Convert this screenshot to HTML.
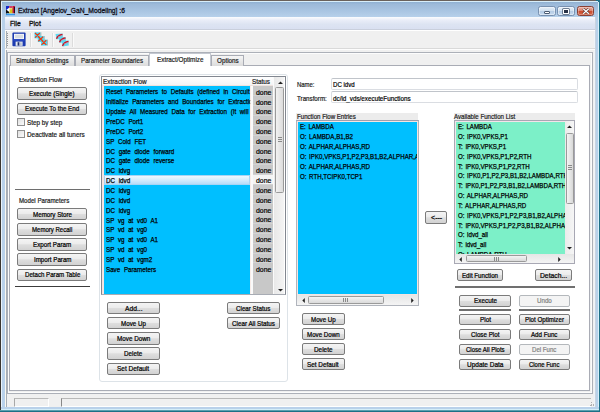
<!DOCTYPE html>
<html><head><meta charset="utf-8"><style>
html,body{margin:0;padding:0;}
body{width:600px;height:412px;position:relative;overflow:hidden;background:#1d6f86;font-family:"Liberation Sans", sans-serif;}
#w div{position:absolute;}
#w .t{white-space:pre;line-height:9px;transform-origin:0 0;-webkit-text-stroke:0.2px currentColor;}
</style></head><body><div id="w"><div style="left:0.00px;top:0.00px;width:599px;height:411px;background:#b9d1ea;"></div><div style="left:0.00px;top:0.00px;width:1px;height:411px;background:#3a3530;"></div><div style="left:1.00px;top:0.00px;width:598px;height:1px;background:#6a625c;"></div><div style="left:1.00px;top:1.00px;width:598px;height:1px;background:#d8eefa;"></div><div style="left:1.00px;top:2.00px;width:598px;height:15px;background:linear-gradient(#8fb0d2,#9dbad9 15%,#a9c5e2 60%,#b6d0ea);"></div><div style="left:1.00px;top:2.00px;width:1px;height:409px;background:#e8f2fb;"></div><div style="left:598.00px;top:1.00px;width:1px;height:410px;background:#d8f0fa;"></div><div style="left:5.00px;top:17.00px;width:590px;height:390px;background:#f0f0f0;"></div><div style="left:5.00px;top:17.00px;width:1px;height:390px;background:#fbf8f0;"></div><div style="left:6.00px;top:17.00px;width:1px;height:390px;background:#a6adb5;"></div><div style="left:594.00px;top:17.00px;width:1px;height:390px;background:#eef4fa;"></div><div style="left:595.00px;top:17.00px;width:0.8px;height:390px;background:#c8d4e0;"></div><div style="left:1.00px;top:407.00px;width:598px;height:3px;background:#b9d1ea;"></div><div style="left:1.00px;top:409.00px;width:598px;height:1px;background:#d4eef8;"></div><div style="left:0.00px;top:410.00px;width:600px;height:1px;background:#5aa0b0;"></div><div style="left:0.00px;top:411.00px;width:600px;height:1px;background:#1d6f86;"></div><div style="left:599.00px;top:0.00px;width:1px;height:412px;background:#1d6f86;"></div><svg style="position:absolute;left:5px;top:5px" width="11" height="11" viewBox="0 0 11 11"><rect x="1" y="1" width="4" height="4" fill="#1428c8"/><rect x="1" y="5" width="4" height="3.5" fill="#101010"/><rect x="4" y="1" width="4" height="7.5" fill="#e8e070"/><rect x="4.2" y="4.5" width="3.6" height="4" fill="#d8c020"/><rect x="7.5" y="1" width="2.5" height="7.5" fill="#c01838"/><rect x="4" y="1" width="3.5" height="2" fill="#d04070"/><path d="M1.5 4.8 L4.5 2.5 L4.5 7.2Z" fill="#fff"/><rect x="9" y="2" width="1" height="6" fill="#300818"/><rect x="1" y="8.8" width="9" height="1.4" fill="#2a90e8"/><rect x="2" y="8.5" width="7" height="0.6" fill="#a0e0ff"/></svg><div class="t" style="left:18.00px;top:6.47px;font-size:7.6px;color:#101020;transform:scaleX(0.886);-webkit-text-stroke:0.3px currentColor;">Extract [Angelov_GaN_Modeling] :6</div><div style="left:538.40px;top:6.20px;width:17.5px;height:9.6px;border:1px solid #7891b0;border-radius:2.5px;box-sizing:border-box;background:linear-gradient(#e6eff8,#d2e1f0 45%,#b4cbe4 50%,#c8dbef 100%);box-shadow:inset 0 0 0 0.6px rgba(255,255,255,.7);"></div><div style="left:544.00px;top:10.80px;width:6px;height:2.8px;background:#fff;border:0.8px solid #4a5a70;border-radius:1px;box-sizing:border-box;"></div><div style="left:557.40px;top:6.20px;width:17.5px;height:9.6px;border:1px solid #7891b0;border-radius:2.5px;box-sizing:border-box;background:linear-gradient(#e6eff8,#d2e1f0 45%,#b4cbe4 50%,#c8dbef 100%);box-shadow:inset 0 0 0 0.6px rgba(255,255,255,.7);"></div><div style="left:563.00px;top:8.80px;width:6.4px;height:5px;background:#2a3448;border:1.3px solid #fff;box-shadow:0 0 0 0.7px #4a5a70;border-radius:0.5px;box-sizing:border-box;"></div><div style="left:576.60px;top:6.20px;width:17.8px;height:9.6px;border:1px solid #8a4034;border-radius:2.5px;box-sizing:border-box;background:linear-gradient(#eab0a2,#dc8470 45%,#c8482c 50%,#d86a4c 100%);box-shadow:inset 0 0 0 0.6px rgba(255,255,255,.5);"></div><svg style="position:absolute;left:581.5px;top:8px" width="8" height="6.5" viewBox="0 0 8 6.5"><path d="M1.2 0.8 L6.8 5.7 M6.8 0.8 L1.2 5.7" stroke="#4a2a28" stroke-width="2.4"/><path d="M1.2 0.8 L6.8 5.7 M6.8 0.8 L1.2 5.7" stroke="#fff" stroke-width="1.3"/></svg><div style="left:596.00px;top:0.00px;width:4px;height:1px;background:#1d6f86;"></div><div style="left:598.00px;top:1.00px;width:2px;height:1px;background:#1d6f86;"></div><div style="left:599.00px;top:2.00px;width:1px;height:1px;background:#1d6f86;"></div><div style="left:5.00px;top:17.00px;width:590px;height:12px;background:linear-gradient(#fbfcfe 0%,#eaeef8 25%,#dde4f2 60%,#d9e0f1 100%);"></div><div style="left:5.00px;top:29.00px;width:590px;height:1px;background:#c9cfdc;"></div><div style="left:5.00px;top:30.00px;width:590px;height:1px;background:#ffffff;"></div><div class="t" style="left:9.50px;top:18.74px;font-size:7.4px;color:#101010;transform:scaleX(0.898);-webkit-text-stroke:0.3px currentColor;">File</div><div class="t" style="left:29.20px;top:18.74px;font-size:7.4px;color:#101010;transform:scaleX(0.925);-webkit-text-stroke:0.3px currentColor;">Plot</div><div style="left:5.00px;top:48.00px;width:590px;height:1px;background:#d9d9d9;"></div><div style="left:5.00px;top:49.00px;width:590px;height:1px;background:#fdfdfd;"></div><div style="left:7.00px;top:33.00px;width:1px;height:1px;background:#9a9a9a;"></div><div style="left:7.00px;top:35.00px;width:1px;height:1px;background:#9a9a9a;"></div><div style="left:7.00px;top:37.00px;width:1px;height:1px;background:#9a9a9a;"></div><div style="left:7.00px;top:39.00px;width:1px;height:1px;background:#9a9a9a;"></div><div style="left:7.00px;top:41.00px;width:1px;height:1px;background:#9a9a9a;"></div><div style="left:7.00px;top:43.00px;width:1px;height:1px;background:#9a9a9a;"></div><div style="left:7.00px;top:45.00px;width:1px;height:1px;background:#9a9a9a;"></div><svg style="position:absolute;left:12px;top:32px" width="14" height="15" viewBox="0 0 14 15"><rect x="0.4" y="0.4" width="13.2" height="13.9" rx="1" fill="#1e3cb0"/><rect x="2" y="1.8" width="10" height="5.4" fill="#f4f6f8"/><rect x="3" y="2.8" width="8" height="3.4" fill="#d8dce2"/><rect x="1.4" y="7.2" width="11.2" height="2" fill="#2848c0"/><rect x="3.6" y="9.6" width="7" height="4.2" fill="#e8ecf0"/><rect x="5.6" y="10.2" width="1.8" height="3.4" fill="#203070"/><rect x="8.2" y="10.4" width="1.4" height="3" fill="#b0b8c8"/></svg><div style="left:30.00px;top:33.00px;width:1px;height:14px;background:#dcdcdc;"></div><div style="left:31.00px;top:33.00px;width:1px;height:14px;background:#fafafa;"></div><svg style="position:absolute;left:33.5px;top:32.4px" width="14" height="14" viewBox="0 0 14 14"><rect x="0.5" y="0.3" width="6" height="6" fill="#48dcf8"/><rect x="6.5" y="0.3" width="0.8" height="6" fill="#9aa"/><rect x="3.8" y="4" width="6" height="6" fill="#48dcf8"/><rect x="9.8" y="4" width="0.8" height="6" fill="#9aa"/><rect x="7" y="7.6" width="6" height="6" fill="#48dcf8"/><rect x="13" y="7.6" width="0.8" height="6" fill="#9aa"/><path d="M1 1 L5.8 5.6 M5.8 1 L1 5.6 M4.3 4.7 L9.1 9.3 M9.1 4.7 L4.3 9.3 M7.5 8.3 L12.3 12.9 M12.3 8.3 L7.5 12.9" stroke="#f03a10" stroke-width="1.2"/></svg><div style="left:52.00px;top:33.00px;width:1px;height:14px;background:#dcdcdc;"></div><div style="left:53.00px;top:33.00px;width:1px;height:14px;background:#fafafa;"></div><svg style="position:absolute;left:55px;top:32.6px" width="14" height="14" viewBox="0 0 14 14"><path d="M0.5 1 L7.5 0.5 L8 5 L1.5 6.5Z" fill="#60d8f0"/><path d="M3.5 4.5 L10.5 4 L11 8.5 L4.5 10Z" fill="#60d8f0"/><path d="M6.5 8 L13.5 7.5 L13.8 12.5 L7.5 13.5Z" fill="#60d8f0"/><path d="M1.5 5.8 Q3 2 7.5 1.5 M4.5 9.3 Q6 5.5 10.5 5 M7.5 13 Q9 9 13.5 8.5" stroke="#d01020" stroke-width="1.3" fill="none"/><path d="M3 4 L7 2.5 M6 7.5 L10 6 M9 11 L13 9.5" stroke="#c0a0b8" stroke-width="0.8"/></svg><div style="left:72.00px;top:33.00px;width:1px;height:14px;background:#dcdcdc;"></div><div style="left:73.00px;top:33.00px;width:1px;height:14px;background:#fafafa;"></div><div style="left:6.50px;top:51.50px;width:586.6px;height:342px;border:1px solid #acb0b8;box-sizing:border-box;"></div><div style="left:7.50px;top:52.50px;width:584.6px;height:340px;border:1px solid #fcfcfc;box-sizing:border-box;"></div><div style="left:9.00px;top:65.00px;width:581.2px;height:326px;border:1px solid #a9acb5;box-sizing:border-box;background:#fff;"></div><div style="left:10.00px;top:54.50px;width:64.5px;height:11px;border:1px solid #a9acb5;border-bottom:none;box-sizing:border-box;background:linear-gradient(#f6f6f6,#e8e8e8 50%,#dcdcdc);"></div><div class="t" style="left:15.50px;top:55.51px;font-size:7.2px;color:#1a1a1a;transform:scaleX(0.853);">Simulation Settings</div><div style="left:74.50px;top:54.50px;width:74.69999999999999px;height:11px;border:1px solid #a9acb5;border-bottom:none;box-sizing:border-box;background:linear-gradient(#f6f6f6,#e8e8e8 50%,#dcdcdc);"></div><div class="t" style="left:81.00px;top:55.51px;font-size:7.2px;color:#1a1a1a;transform:scaleX(0.862);">Parameter Boundaries</div><div style="left:211.20px;top:54.50px;width:33.30000000000001px;height:11px;border:1px solid #a9acb5;border-bottom:none;box-sizing:border-box;background:linear-gradient(#f6f6f6,#e8e8e8 50%,#dcdcdc);"></div><div class="t" style="left:217.00px;top:55.51px;font-size:7.2px;color:#1a1a1a;transform:scaleX(0.876);">Options</div><div style="left:149.20px;top:53.30px;width:62px;height:13px;border:1px solid #c4c8d0;border-bottom:none;box-sizing:border-box;background:#fff;"></div><div class="t" style="left:156.70px;top:54.81px;font-size:7.2px;color:#1a1a1a;transform:scaleX(0.882);">Extract/Optimize</div><div style="left:14.00px;top:397.50px;width:35px;height:9px;border-top:1px solid #b8b8b8;border-left:1px solid #a8a8a8;border-right:1px solid #fff;border-bottom:1px solid #fff;box-sizing:border-box;"></div><div style="left:61.00px;top:397.50px;width:530px;height:9px;border-top:1px solid #b8b8b8;border-left:1px solid #888;border-bottom:1px solid #fff;box-sizing:border-box;"></div><div style="left:591.00px;top:402.00px;width:1px;height:1px;background:#b0b0b0;"></div><div style="left:592.50px;top:403.50px;width:1px;height:1px;background:#b0b0b0;"></div><div style="left:591.00px;top:403.50px;width:1px;height:1px;background:#b0b0b0;"></div><div style="left:589.50px;top:405.00px;width:1px;height:1px;background:#b0b0b0;"></div><div style="left:591.00px;top:405.00px;width:1px;height:1px;background:#b0b0b0;"></div><div style="left:592.50px;top:405.00px;width:1px;height:1px;background:#b0b0b0;"></div><div class="t" style="left:18.90px;top:74.87px;font-size:7.0px;color:#1a1a1a;transform:scaleX(0.898);">Extraction Flow</div><div style="left:17.40px;top:87.40px;width:69.69999999999999px;height:12.199999999999989px;border:1px solid #7b7b7b;border-radius:2px;box-sizing:border-box;background:linear-gradient(#f4f4f4 0%,#ececec 45%,#dedede 52%,#d2d2d2 100%);"></div><div class="t" style="left:29.45px;top:89.17px;font-size:7.0px;color:#000;transform:scaleX(0.888);-webkit-text-stroke:0.22px currentColor;">Execute (Single)</div><div style="left:17.40px;top:102.75px;width:69.69999999999999px;height:11.849999999999994px;border:1px solid #7b7b7b;border-radius:2px;box-sizing:border-box;background:linear-gradient(#f4f4f4 0%,#ececec 45%,#dedede 52%,#d2d2d2 100%);"></div><div class="t" style="left:25.10px;top:104.35px;font-size:7.0px;color:#000;transform:scaleX(0.896);-webkit-text-stroke:0.22px currentColor;">Execute To the End</div><div style="left:17.00px;top:118.00px;width:8px;height:8px;border:1px solid #8f8f8f;box-sizing:border-box;background:linear-gradient(135deg,#e0e0e0,#fafafa);"></div><div class="t" style="left:26.90px;top:118.27px;font-size:7.0px;color:#1a1a1a;transform:scaleX(0.907);">Step by step</div><div style="left:17.00px;top:130.00px;width:8px;height:8px;border:1px solid #8f8f8f;box-sizing:border-box;background:linear-gradient(135deg,#e0e0e0,#fafafa);"></div><div class="t" style="left:26.90px;top:129.67px;font-size:7.0px;color:#1a1a1a;transform:scaleX(0.911);">Deactivate all tuners</div><div style="left:15.00px;top:188.50px;width:75px;height:1.2px;background:#6e6e6e;"></div><div class="t" style="left:18.80px;top:195.87px;font-size:7.0px;color:#1a1a1a;transform:scaleX(0.878);">Model Parameters</div><div style="left:17.40px;top:208.30px;width:69.69999999999999px;height:12.199999999999989px;border:1px solid #7b7b7b;border-radius:2px;box-sizing:border-box;background:linear-gradient(#f4f4f4 0%,#ececec 45%,#dedede 52%,#d2d2d2 100%);"></div><div class="t" style="left:32.70px;top:210.07px;font-size:7.0px;color:#000;transform:scaleX(0.889);-webkit-text-stroke:0.22px currentColor;">Memory Store</div><div style="left:17.40px;top:223.35px;width:69.69999999999999px;height:12.199999999999989px;border:1px solid #7b7b7b;border-radius:2px;box-sizing:border-box;background:linear-gradient(#f4f4f4 0%,#ececec 45%,#dedede 52%,#d2d2d2 100%);"></div><div class="t" style="left:32.10px;top:225.12px;font-size:7.0px;color:#000;transform:scaleX(0.863);-webkit-text-stroke:0.22px currentColor;">Memory Recall</div><div style="left:17.40px;top:238.40px;width:69.69999999999999px;height:12.199999999999989px;border:1px solid #7b7b7b;border-radius:2px;box-sizing:border-box;background:linear-gradient(#f4f4f4 0%,#ececec 45%,#dedede 52%,#d2d2d2 100%);"></div><div class="t" style="left:33.10px;top:240.17px;font-size:7.0px;color:#000;transform:scaleX(0.895);-webkit-text-stroke:0.22px currentColor;">Export Param</div><div style="left:17.40px;top:253.45px;width:69.69999999999999px;height:12.200000000000017px;border:1px solid #7b7b7b;border-radius:2px;box-sizing:border-box;background:linear-gradient(#f4f4f4 0%,#ececec 45%,#dedede 52%,#d2d2d2 100%);"></div><div class="t" style="left:33.50px;top:255.22px;font-size:7.0px;color:#000;transform:scaleX(0.884);-webkit-text-stroke:0.22px currentColor;">Import Param</div><div style="left:17.40px;top:268.50px;width:69.69999999999999px;height:12.199999999999989px;border:1px solid #7b7b7b;border-radius:2px;box-sizing:border-box;background:linear-gradient(#f4f4f4 0%,#ececec 45%,#dedede 52%,#d2d2d2 100%);"></div><div class="t" style="left:24.55px;top:270.27px;font-size:7.0px;color:#000;transform:scaleX(0.875);-webkit-text-stroke:0.22px currentColor;">Detach Param Table</div><div style="left:15.00px;top:285.80px;width:75px;height:1.2px;background:#3c3c3c;"></div><div style="left:98.50px;top:73.50px;width:189px;height:308px;border:1px solid #dde3e8;border-radius:3px;box-sizing:border-box;"></div><div style="left:101.00px;top:76.00px;width:184.5px;height:219px;border:1px solid #828790;border-bottom-color:#a8acb4;box-sizing:border-box;background:#fff;"></div><div style="left:102.00px;top:77.00px;width:172px;height:9px;background:linear-gradient(#ffffff,#f1f2f4);"></div><div class="t" style="left:102.50px;top:77.37px;font-size:7.0px;color:#1a1a1a;transform:scaleX(0.913);">Extraction Flow</div><div class="t" style="left:252.00px;top:77.37px;font-size:7.0px;color:#1a1a1a;transform:scaleX(0.906);">Status</div><div style="left:102.00px;top:86.00px;width:2px;height:208px;background:#f6e4e0;"></div><div style="left:104.00px;top:86.30px;width:146px;height:207.7px;background:#00bfff;"></div><div style="left:102.00px;top:85.30px;width:172px;height:1px;background:#efe2de;"></div><div style="left:250.00px;top:86.00px;width:1.5px;height:208px;background:#f8ece8;"></div><div style="left:251.00px;top:86.00px;width:1.5px;height:208px;background:#fafafa;"></div><div style="left:252.50px;top:86.00px;width:20.5px;height:208px;background:#c8c8c8;"></div><div style="left:273.00px;top:77.00px;width:1.5px;height:217px;background:#fafafa;"></div><div class="t" style="left:106.25px;top:87.47px;font-size:7.0px;color:#000;transform:scaleX(0.890);width:161.52px;overflow:hidden;word-spacing:2.2px;-webkit-text-stroke:0.25px #000;">Reset Parameters to Defaults (defined in Circuit Page)</div><div class="t" style="left:256.00px;top:87.67px;font-size:7.0px;color:#000;transform:scaleX(0.982);">done</div><div class="t" style="left:106.25px;top:97.32px;font-size:7.0px;color:#000;transform:scaleX(0.890);width:161.52px;overflow:hidden;word-spacing:2.2px;-webkit-text-stroke:0.25px #000;">Initialize Parameters and Boundaries for Extraction</div><div class="t" style="left:256.00px;top:97.50px;font-size:7.0px;color:#000;transform:scaleX(0.982);">done</div><div class="t" style="left:106.25px;top:107.17px;font-size:7.0px;color:#000;transform:scaleX(0.890);width:161.52px;overflow:hidden;word-spacing:2.2px;-webkit-text-stroke:0.25px #000;">Update All Measured Data for Extraction (It will take a while)</div><div class="t" style="left:256.00px;top:107.33px;font-size:7.0px;color:#000;transform:scaleX(0.982);">done</div><div class="t" style="left:106.25px;top:117.02px;font-size:7.0px;color:#000;transform:scaleX(0.890);width:161.52px;overflow:hidden;word-spacing:2.2px;-webkit-text-stroke:0.25px #000;">PreDC Port1</div><div class="t" style="left:256.00px;top:117.16px;font-size:7.0px;color:#000;transform:scaleX(0.982);">done</div><div class="t" style="left:106.25px;top:126.87px;font-size:7.0px;color:#000;transform:scaleX(0.890);width:161.52px;overflow:hidden;word-spacing:2.2px;-webkit-text-stroke:0.25px #000;">PreDC Port2</div><div class="t" style="left:256.00px;top:126.99px;font-size:7.0px;color:#000;transform:scaleX(0.982);">done</div><div class="t" style="left:106.25px;top:136.72px;font-size:7.0px;color:#000;transform:scaleX(0.890);width:161.52px;overflow:hidden;word-spacing:2.2px;-webkit-text-stroke:0.25px #000;">SP Cold FET</div><div class="t" style="left:256.00px;top:136.82px;font-size:7.0px;color:#000;transform:scaleX(0.982);">done</div><div class="t" style="left:106.25px;top:146.57px;font-size:7.0px;color:#000;transform:scaleX(0.890);width:161.52px;overflow:hidden;word-spacing:2.2px;-webkit-text-stroke:0.25px #000;">DC gate diode forward</div><div class="t" style="left:256.00px;top:146.65px;font-size:7.0px;color:#000;transform:scaleX(0.982);">done</div><div class="t" style="left:106.25px;top:156.42px;font-size:7.0px;color:#000;transform:scaleX(0.890);width:161.52px;overflow:hidden;word-spacing:2.2px;-webkit-text-stroke:0.25px #000;">DC gate diode reverse</div><div class="t" style="left:256.00px;top:156.48px;font-size:7.0px;color:#000;transform:scaleX(0.982);">done</div><div class="t" style="left:106.25px;top:166.27px;font-size:7.0px;color:#000;transform:scaleX(0.890);width:161.52px;overflow:hidden;word-spacing:2.2px;-webkit-text-stroke:0.25px #000;">DC idvg</div><div class="t" style="left:256.00px;top:166.31px;font-size:7.0px;color:#000;transform:scaleX(0.982);">done</div><div style="left:104.00px;top:175.07px;width:146px;height:10.03px;background:linear-gradient(#eef8ff,#d4ecfd 50%,#b8dcf9);border:1px solid #a8d4f4;box-sizing:border-box;"></div><div style="left:252.50px;top:174.47px;width:20.5px;height:9.83px;background:#f4f4f4;"></div><div class="t" style="left:106.25px;top:176.12px;font-size:7.0px;color:#000;transform:scaleX(0.890);width:161.52px;overflow:hidden;word-spacing:2.2px;-webkit-text-stroke:0.25px #000;">DC idvd</div><div class="t" style="left:256.00px;top:176.14px;font-size:7.0px;color:#000;transform:scaleX(0.982);">done</div><div class="t" style="left:106.25px;top:185.97px;font-size:7.0px;color:#000;transform:scaleX(0.890);width:161.52px;overflow:hidden;word-spacing:2.2px;-webkit-text-stroke:0.25px #000;">DC idvg</div><div class="t" style="left:256.00px;top:185.97px;font-size:7.0px;color:#000;transform:scaleX(0.982);">done</div><div class="t" style="left:106.25px;top:195.82px;font-size:7.0px;color:#000;transform:scaleX(0.890);width:161.52px;overflow:hidden;word-spacing:2.2px;-webkit-text-stroke:0.25px #000;">DC idvd</div><div class="t" style="left:256.00px;top:195.80px;font-size:7.0px;color:#000;transform:scaleX(0.982);">done</div><div class="t" style="left:106.25px;top:205.67px;font-size:7.0px;color:#000;transform:scaleX(0.890);width:161.52px;overflow:hidden;word-spacing:2.2px;-webkit-text-stroke:0.25px #000;">DC idvg</div><div class="t" style="left:256.00px;top:205.63px;font-size:7.0px;color:#000;transform:scaleX(0.982);">done</div><div class="t" style="left:106.25px;top:215.52px;font-size:7.0px;color:#000;transform:scaleX(0.890);width:161.52px;overflow:hidden;word-spacing:2.2px;-webkit-text-stroke:0.25px #000;">SP vg at vd0 A1</div><div class="t" style="left:256.00px;top:215.46px;font-size:7.0px;color:#000;transform:scaleX(0.982);">done</div><div class="t" style="left:106.25px;top:225.37px;font-size:7.0px;color:#000;transform:scaleX(0.890);width:161.52px;overflow:hidden;word-spacing:2.2px;-webkit-text-stroke:0.25px #000;">SP vd at vg0</div><div class="t" style="left:256.00px;top:225.29px;font-size:7.0px;color:#000;transform:scaleX(0.982);">done</div><div class="t" style="left:106.25px;top:235.22px;font-size:7.0px;color:#000;transform:scaleX(0.890);width:161.52px;overflow:hidden;word-spacing:2.2px;-webkit-text-stroke:0.25px #000;">SP vg at vd0 A1</div><div class="t" style="left:256.00px;top:235.12px;font-size:7.0px;color:#000;transform:scaleX(0.982);">done</div><div class="t" style="left:106.25px;top:245.07px;font-size:7.0px;color:#000;transform:scaleX(0.890);width:161.52px;overflow:hidden;word-spacing:2.2px;-webkit-text-stroke:0.25px #000;">SP vd at vg0</div><div class="t" style="left:256.00px;top:244.95px;font-size:7.0px;color:#000;transform:scaleX(0.982);">done</div><div class="t" style="left:106.25px;top:254.92px;font-size:7.0px;color:#000;transform:scaleX(0.890);width:161.52px;overflow:hidden;word-spacing:2.2px;-webkit-text-stroke:0.25px #000;">SP vd at vgm2</div><div class="t" style="left:256.00px;top:254.78px;font-size:7.0px;color:#000;transform:scaleX(0.982);">done</div><div class="t" style="left:106.25px;top:264.77px;font-size:7.0px;color:#000;transform:scaleX(0.890);width:161.52px;overflow:hidden;word-spacing:2.2px;-webkit-text-stroke:0.25px #000;">Save Parameters</div><div class="t" style="left:256.00px;top:264.61px;font-size:7.0px;color:#000;transform:scaleX(0.982);">done</div><div style="left:252.50px;top:95.33px;width:20.5px;height:0.6px;background:#d2d2d2;"></div><div style="left:252.50px;top:105.16px;width:20.5px;height:0.6px;background:#d2d2d2;"></div><div style="left:252.50px;top:114.99px;width:20.5px;height:0.6px;background:#d2d2d2;"></div><div style="left:252.50px;top:124.82px;width:20.5px;height:0.6px;background:#d2d2d2;"></div><div style="left:252.50px;top:134.65px;width:20.5px;height:0.6px;background:#d2d2d2;"></div><div style="left:252.50px;top:144.48px;width:20.5px;height:0.6px;background:#d2d2d2;"></div><div style="left:252.50px;top:154.31px;width:20.5px;height:0.6px;background:#d2d2d2;"></div><div style="left:252.50px;top:164.14px;width:20.5px;height:0.6px;background:#d2d2d2;"></div><div style="left:252.50px;top:173.97px;width:20.5px;height:0.6px;background:#d2d2d2;"></div><div style="left:252.50px;top:183.80px;width:20.5px;height:0.6px;background:#d2d2d2;"></div><div style="left:252.50px;top:193.63px;width:20.5px;height:0.6px;background:#d2d2d2;"></div><div style="left:252.50px;top:203.46px;width:20.5px;height:0.6px;background:#d2d2d2;"></div><div style="left:252.50px;top:213.29px;width:20.5px;height:0.6px;background:#d2d2d2;"></div><div style="left:252.50px;top:223.12px;width:20.5px;height:0.6px;background:#d2d2d2;"></div><div style="left:252.50px;top:232.95px;width:20.5px;height:0.6px;background:#d2d2d2;"></div><div style="left:252.50px;top:242.78px;width:20.5px;height:0.6px;background:#d2d2d2;"></div><div style="left:252.50px;top:252.61px;width:20.5px;height:0.6px;background:#d2d2d2;"></div><div style="left:252.50px;top:262.44px;width:20.5px;height:0.6px;background:#d2d2d2;"></div><div style="left:274.30px;top:77.00px;width:10.2px;height:217px;background:linear-gradient(90deg,#e8e8e8,#f4f4f4);"></div><div style="left:275.00px;top:87.00px;width:9px;height:106px;border:1px solid #9a9a9a;border-radius:1.5px;box-sizing:border-box;background:linear-gradient(90deg,#f2f2f2,#dcdcdc);"></div><div style="left:277.50px;top:137.00px;width:4px;height:1px;background:#8a8a8a;"></div><div style="left:277.50px;top:139.00px;width:4px;height:1px;background:#8a8a8a;"></div><div style="left:277.50px;top:141.00px;width:4px;height:1px;background:#8a8a8a;"></div><svg style="position:absolute;left:276.5px;top:80px" width="7" height="5"><path d="M1 4 L3.5 1.5 L6 4Z" fill="#222"/></svg><svg style="position:absolute;left:276.5px;top:287.5px" width="7" height="5"><path d="M1 1 L3.5 3.5 L6 1Z" fill="#222"/></svg><div style="left:106.80px;top:302.10px;width:52.89999999999999px;height:12.300000000000011px;border:1px solid #7b7b7b;border-radius:2px;box-sizing:border-box;background:linear-gradient(#f4f4f4 0%,#ececec 45%,#dedede 52%,#d2d2d2 100%);"></div><div class="t" style="left:124.50px;top:303.92px;font-size:7.0px;color:#000;transform:scaleX(0.956);-webkit-text-stroke:0.22px currentColor;">Add...</div><div style="left:106.80px;top:317.20px;width:52.89999999999999px;height:12.300000000000011px;border:1px solid #7b7b7b;border-radius:2px;box-sizing:border-box;background:linear-gradient(#f4f4f4 0%,#ececec 45%,#dedede 52%,#d2d2d2 100%);"></div><div class="t" style="left:120.80px;top:319.02px;font-size:7.0px;color:#000;transform:scaleX(0.889);-webkit-text-stroke:0.22px currentColor;">Move Up</div><div style="left:106.80px;top:332.30px;width:52.89999999999999px;height:12.300000000000011px;border:1px solid #7b7b7b;border-radius:2px;box-sizing:border-box;background:linear-gradient(#f4f4f4 0%,#ececec 45%,#dedede 52%,#d2d2d2 100%);"></div><div class="t" style="left:116.55px;top:334.12px;font-size:7.0px;color:#000;transform:scaleX(0.903);-webkit-text-stroke:0.22px currentColor;">Move Down</div><div style="left:106.80px;top:347.40px;width:52.89999999999999px;height:12.300000000000011px;border:1px solid #7b7b7b;border-radius:2px;box-sizing:border-box;background:linear-gradient(#f4f4f4 0%,#ececec 45%,#dedede 52%,#d2d2d2 100%);"></div><div class="t" style="left:124.15px;top:349.22px;font-size:7.0px;color:#000;transform:scaleX(0.899);-webkit-text-stroke:0.22px currentColor;">Delete</div><div style="left:106.80px;top:362.50px;width:52.89999999999999px;height:12.300000000000011px;border:1px solid #7b7b7b;border-radius:2px;box-sizing:border-box;background:linear-gradient(#f4f4f4 0%,#ececec 45%,#dedede 52%,#d2d2d2 100%);"></div><div class="t" style="left:117.20px;top:364.32px;font-size:7.0px;color:#000;transform:scaleX(0.927);-webkit-text-stroke:0.22px currentColor;">Set Default</div><div style="left:227.20px;top:302.30px;width:52.5px;height:12.0px;border:1px solid #7b7b7b;border-radius:2px;box-sizing:border-box;background:linear-gradient(#f4f4f4 0%,#ececec 45%,#dedede 52%,#d2d2d2 100%);"></div><div class="t" style="left:236.30px;top:303.97px;font-size:7.0px;color:#000;transform:scaleX(0.890);-webkit-text-stroke:0.22px currentColor;">Clear Status</div><div style="left:227.20px;top:317.30px;width:52.5px;height:12.0px;border:1px solid #7b7b7b;border-radius:2px;box-sizing:border-box;background:linear-gradient(#f4f4f4 0%,#ececec 45%,#dedede 52%,#d2d2d2 100%);"></div><div class="t" style="left:232.00px;top:318.97px;font-size:7.0px;color:#000;transform:scaleX(0.896);-webkit-text-stroke:0.22px currentColor;">Clear All Status</div><div class="t" style="left:296.70px;top:79.57px;font-size:7.0px;color:#1a1a1a;transform:scaleX(0.848);">Name:</div><div style="left:331.00px;top:77.50px;width:247px;height:12px;border:1px solid #dadde2;border-top-color:#c0c4ca;border-radius:2px;box-sizing:border-box;background:#fff;"></div><div class="t" style="left:332.80px;top:79.57px;font-size:7.0px;color:#000;transform:scaleX(0.871);">DC idvd</div><div class="t" style="left:296.70px;top:93.67px;font-size:7.0px;color:#1a1a1a;transform:scaleX(0.887);">Transform:</div><div style="left:331.00px;top:91.30px;width:247px;height:11.7px;border:1px solid #dadde2;border-top-color:#c0c4ca;border-radius:2px;box-sizing:border-box;background:#fff;"></div><div class="t" style="left:332.80px;top:93.67px;font-size:7.0px;color:#000;transform:scaleX(0.899);">dc/id_vds/executeFunctions</div><div style="left:296.00px;top:112.80px;width:122px;height:7px;background:#ececec;"></div><div class="t" style="left:296.70px;top:111.67px;font-size:7.0px;color:#1a1a1a;transform:scaleX(0.874);">Function Flow Entries</div><div style="left:296.30px;top:120.20px;width:122.3px;height:186px;border:1px solid #b0b4bc;border-top-color:#a0a0b0;box-sizing:border-box;background:#f0f0f0;"></div><div style="left:297.30px;top:121.20px;width:120.3px;height:173.6px;background:#f6e4e0;"></div><div style="left:298.00px;top:121.80px;width:119px;height:172.6px;background:#00bfff;"></div><div style="left:298.00px;top:121.80px;width:119px;height:172.6px;overflow:hidden;"><div class="t" style="left:2.00px;top:0.67px;font-size:7.0px;color:#000;transform:scaleX(0.880);word-spacing:1px;-webkit-text-stroke:0.25px #000;">E: LAMBDA</div><div class="t" style="left:2.00px;top:10.50px;font-size:7.0px;color:#000;transform:scaleX(0.880);word-spacing:1px;-webkit-text-stroke:0.25px #000;">O: LAMBDA,B1,B2</div><div class="t" style="left:2.00px;top:20.33px;font-size:7.0px;color:#000;transform:scaleX(0.880);word-spacing:1px;-webkit-text-stroke:0.25px #000;">O: ALPHAR,ALPHAS,RD</div><div class="t" style="left:2.00px;top:30.16px;font-size:7.0px;color:#000;transform:scaleX(0.880);word-spacing:1px;-webkit-text-stroke:0.25px #000;">O: IPK0,VPKS,P1,P2,P3,B1,B2,ALPHAR,ALPHAS</div><div class="t" style="left:2.00px;top:39.99px;font-size:7.0px;color:#000;transform:scaleX(0.880);word-spacing:1px;-webkit-text-stroke:0.25px #000;">O: ALPHAR,ALPHAS,RD</div><div class="t" style="left:2.00px;top:49.82px;font-size:7.0px;color:#000;transform:scaleX(0.880);word-spacing:1px;-webkit-text-stroke:0.25px #000;">O: RTH,TCIPK0,TCP1</div></div><div style="left:297.30px;top:294.80px;width:120.3px;height:10.5px;background:linear-gradient(#e6e6e6,#f4f4f4);"></div><div style="left:308.00px;top:296.40px;width:75.5px;height:7.6px;border:1px solid #9a9a9a;border-radius:1.5px;box-sizing:border-box;background:linear-gradient(#f4f4f4,#dadada);"></div><div style="left:343.00px;top:298.00px;width:1px;height:4px;background:#8a8a8a;"></div><div style="left:345.00px;top:298.00px;width:1px;height:4px;background:#8a8a8a;"></div><div style="left:347.00px;top:298.00px;width:1px;height:4px;background:#8a8a8a;"></div><svg style="position:absolute;left:300.5px;top:296.5px" width="5" height="7"><path d="M3.8 1 L1.3 3.5 L3.8 6Z" fill="#222"/></svg><svg style="position:absolute;left:410px;top:296.5px" width="5" height="7"><path d="M1.2 1 L3.7 3.5 L1.2 6Z" fill="#222"/></svg><div style="left:425.10px;top:211.30px;width:22.19999999999999px;height:12.399999999999977px;border:1px solid #7b7b7b;border-radius:2px;box-sizing:border-box;background:linear-gradient(#f4f4f4 0%,#ececec 45%,#dedede 52%,#d2d2d2 100%);"></div><div class="t" style="left:430.60px;top:213.17px;font-size:7.0px;color:#000;transform:scaleX(1.010);-webkit-text-stroke:0.22px currentColor;">&lt;---</div><div style="left:301.80px;top:313.30px;width:42.80000000000001px;height:11.899999999999977px;border:1px solid #7b7b7b;border-radius:2px;box-sizing:border-box;background:linear-gradient(#f4f4f4 0%,#ececec 45%,#dedede 52%,#d2d2d2 100%);"></div><div class="t" style="left:310.80px;top:314.92px;font-size:7.0px;color:#000;transform:scaleX(0.885);-webkit-text-stroke:0.22px currentColor;">Move Up</div><div style="left:301.80px;top:328.35px;width:42.80000000000001px;height:11.899999999999977px;border:1px solid #7b7b7b;border-radius:2px;box-sizing:border-box;background:linear-gradient(#f4f4f4 0%,#ececec 45%,#dedede 52%,#d2d2d2 100%);"></div><div class="t" style="left:306.85px;top:329.97px;font-size:7.0px;color:#000;transform:scaleX(0.885);-webkit-text-stroke:0.22px currentColor;">Move Down</div><div style="left:301.80px;top:343.40px;width:42.80000000000001px;height:11.899999999999977px;border:1px solid #7b7b7b;border-radius:2px;box-sizing:border-box;background:linear-gradient(#f4f4f4 0%,#ececec 45%,#dedede 52%,#d2d2d2 100%);"></div><div class="t" style="left:313.95px;top:345.02px;font-size:7.0px;color:#000;transform:scaleX(0.914);-webkit-text-stroke:0.22px currentColor;">Delete</div><div style="left:301.80px;top:358.45px;width:42.80000000000001px;height:11.899999999999977px;border:1px solid #7b7b7b;border-radius:2px;box-sizing:border-box;background:linear-gradient(#f4f4f4 0%,#ececec 45%,#dedede 52%,#d2d2d2 100%);"></div><div class="t" style="left:307.40px;top:360.07px;font-size:7.0px;color:#000;transform:scaleX(0.912);-webkit-text-stroke:0.22px currentColor;">Set Default</div><div style="left:454.00px;top:112.60px;width:121px;height:7px;background:#ececec;"></div><div class="t" style="left:454.20px;top:111.67px;font-size:7.0px;color:#1a1a1a;transform:scaleX(0.875);">Available Function List</div><div style="left:454.30px;top:120.40px;width:120.7px;height:143.9px;border:1px solid #a8a8b4;box-sizing:border-box;background:#f0f0f0;"></div><div style="left:455.30px;top:121.40px;width:109.5px;height:132.6px;background:#f4e4ea;"></div><div style="left:455.50px;top:121.60px;width:109px;height:132px;background:#7cf0c8;"></div><div style="left:455.50px;top:121.60px;width:109px;height:132px;overflow:hidden;"><div class="t" style="left:2.30px;top:0.67px;font-size:7.0px;color:#000;transform:scaleX(0.880);word-spacing:1px;-webkit-text-stroke:0.25px #000;">E: LAMBDA</div><div class="t" style="left:2.30px;top:10.50px;font-size:7.0px;color:#000;transform:scaleX(0.880);word-spacing:1px;-webkit-text-stroke:0.25px #000;">O: IPK0,VPKS,P1</div><div class="t" style="left:2.30px;top:20.33px;font-size:7.0px;color:#000;transform:scaleX(0.880);word-spacing:1px;-webkit-text-stroke:0.25px #000;">T: IPK0,VPKS,P1</div><div class="t" style="left:2.30px;top:30.16px;font-size:7.0px;color:#000;transform:scaleX(0.880);word-spacing:1px;-webkit-text-stroke:0.25px #000;">O: IPK0,VPKS,P1,P2,RTH</div><div class="t" style="left:2.30px;top:39.99px;font-size:7.0px;color:#000;transform:scaleX(0.880);word-spacing:1px;-webkit-text-stroke:0.25px #000;">T: IPK0,VPKS,P1,P2,RTH</div><div class="t" style="left:2.30px;top:49.82px;font-size:7.0px;color:#000;transform:scaleX(0.880);word-spacing:1px;-webkit-text-stroke:0.25px #000;">O: IPK0,P1,P2,P3,B1,B2,LAMBDA,RTH</div><div class="t" style="left:2.30px;top:59.65px;font-size:7.0px;color:#000;transform:scaleX(0.880);word-spacing:1px;-webkit-text-stroke:0.25px #000;">T: IPK0,P1,P2,P3,B1,B2,LAMBDA,RTH</div><div class="t" style="left:2.30px;top:69.48px;font-size:7.0px;color:#000;transform:scaleX(0.880);word-spacing:1px;-webkit-text-stroke:0.25px #000;">O: ALPHAR,ALPHAS,RD</div><div class="t" style="left:2.30px;top:79.31px;font-size:7.0px;color:#000;transform:scaleX(0.880);word-spacing:1px;-webkit-text-stroke:0.25px #000;">T: ALPHAR,ALPHAS,RD</div><div class="t" style="left:2.30px;top:89.14px;font-size:7.0px;color:#000;transform:scaleX(0.880);word-spacing:1px;-webkit-text-stroke:0.25px #000;">O: IPK0,VPKS,P1,P2,P3,B1,B2,ALPHAR,ALPHAS</div><div class="t" style="left:2.30px;top:98.97px;font-size:7.0px;color:#000;transform:scaleX(0.880);word-spacing:1px;-webkit-text-stroke:0.25px #000;">T: IPK0,VPKS,P1,P2,P3,B1,B2,ALPHAR,ALPHAS</div><div class="t" style="left:2.30px;top:108.80px;font-size:7.0px;color:#000;transform:scaleX(0.880);word-spacing:1px;-webkit-text-stroke:0.25px #000;">O: idvd_all</div><div class="t" style="left:2.30px;top:118.63px;font-size:7.0px;color:#000;transform:scaleX(0.880);word-spacing:1px;-webkit-text-stroke:0.25px #000;">T: idvd_all</div><div class="t" style="left:2.30px;top:128.46px;font-size:7.0px;color:#000;transform:scaleX(0.880);word-spacing:1px;-webkit-text-stroke:0.25px #000;">O: LAMBDA,RTH</div></div><div style="left:565.30px;top:121.40px;width:8.8px;height:132.6px;background:linear-gradient(90deg,#ebebeb,#f6f6f6);"></div><div style="left:566.00px;top:132.50px;width:7.5px;height:71px;border:1px solid #9a9a9a;border-radius:1.5px;box-sizing:border-box;background:linear-gradient(90deg,#f4f4f4,#d8d8d8);"></div><div style="left:567.50px;top:165.00px;width:4px;height:1px;background:#8a8a8a;"></div><div style="left:567.50px;top:167.00px;width:4px;height:1px;background:#8a8a8a;"></div><div style="left:567.50px;top:169.00px;width:4px;height:1px;background:#8a8a8a;"></div><svg style="position:absolute;left:566px;top:124px" width="7" height="5"><path d="M1 4 L3.5 1.5 L6 4Z" fill="#222"/></svg><svg style="position:absolute;left:566px;top:246px" width="7" height="5"><path d="M1 1 L3.5 3.5 L6 1Z" fill="#222"/></svg><div style="left:455.30px;top:254.00px;width:118.8px;height:9.3px;background:linear-gradient(#e6e6e6,#f4f4f4);"></div><div style="left:466.00px;top:255.00px;width:61px;height:7.3px;border:1px solid #9a9a9a;border-radius:1.5px;box-sizing:border-box;background:linear-gradient(#f4f4f4,#dadada);"></div><div style="left:494.00px;top:256.60px;width:1px;height:4px;background:#8a8a8a;"></div><div style="left:496.00px;top:256.60px;width:1px;height:4px;background:#8a8a8a;"></div><div style="left:498.00px;top:256.60px;width:1px;height:4px;background:#8a8a8a;"></div><svg style="position:absolute;left:458px;top:255.5px" width="5" height="7"><path d="M3.8 1 L1.3 3.5 L3.8 6Z" fill="#222"/></svg><svg style="position:absolute;left:557px;top:255.5px" width="5" height="7"><path d="M1.2 1 L3.7 3.5 L1.2 6Z" fill="#222"/></svg><div style="left:457.40px;top:269.40px;width:46.0px;height:11.900000000000034px;border:1px solid #7b7b7b;border-radius:2px;box-sizing:border-box;background:linear-gradient(#f4f4f4 0%,#ececec 45%,#dedede 52%,#d2d2d2 100%);"></div><div class="t" style="left:462.40px;top:271.02px;font-size:7.0px;color:#000;transform:scaleX(0.881);-webkit-text-stroke:0.22px currentColor;">Edit Function</div><div style="left:535.40px;top:269.40px;width:36.60000000000002px;height:11.900000000000034px;border:1px solid #7b7b7b;border-radius:2px;box-sizing:border-box;background:linear-gradient(#f4f4f4 0%,#ececec 45%,#dedede 52%,#d2d2d2 100%);"></div><div class="t" style="left:540.20px;top:271.02px;font-size:7.0px;color:#000;transform:scaleX(0.964);-webkit-text-stroke:0.22px currentColor;">Detach...</div><div style="left:454.70px;top:286.20px;width:120px;height:1.4px;background:#707070;"></div><div style="left:459.40px;top:294.60px;width:51.200000000000045px;height:12.0px;border:1px solid #7b7b7b;border-radius:2px;box-sizing:border-box;background:linear-gradient(#f4f4f4 0%,#ececec 45%,#dedede 52%,#d2d2d2 100%);"></div><div class="t" style="left:473.50px;top:296.27px;font-size:7.0px;color:#000;transform:scaleX(0.909);-webkit-text-stroke:0.22px currentColor;">Execute</div><div style="left:518.60px;top:294.60px;width:51.39999999999998px;height:12.0px;border:1px solid #b4b8bc;border-radius:2px;box-sizing:border-box;background:linear-gradient(#f4f4f4 0%,#ececec 45%,#dedede 52%,#d2d2d2 100%);background:#f4f4f4;"></div><div class="t" style="left:536.90px;top:296.27px;font-size:7.0px;color:#838383;transform:scaleX(0.884);-webkit-text-stroke:0.22px currentColor;">Undo</div><div style="left:459.40px;top:309.40px;width:51.2px;height:1.5px;background:#707070;"></div><div style="left:518.60px;top:309.40px;width:51.4px;height:1.5px;background:#707070;"></div><div style="left:459.40px;top:313.60px;width:51.200000000000045px;height:11.399999999999977px;border:1px solid #7b7b7b;border-radius:2px;box-sizing:border-box;background:linear-gradient(#f4f4f4 0%,#ececec 45%,#dedede 52%,#d2d2d2 100%);"></div><div class="t" style="left:479.50px;top:314.97px;font-size:7.0px;color:#000;transform:scaleX(0.912);-webkit-text-stroke:0.22px currentColor;">Plot</div><div style="left:518.60px;top:313.60px;width:51.39999999999998px;height:11.399999999999977px;border:1px solid #7b7b7b;border-radius:2px;box-sizing:border-box;background:linear-gradient(#f4f4f4 0%,#ececec 45%,#dedede 52%,#d2d2d2 100%);"></div><div class="t" style="left:524.80px;top:314.97px;font-size:7.0px;color:#000;transform:scaleX(0.887);-webkit-text-stroke:0.22px currentColor;">Plot Optimizer</div><div style="left:459.40px;top:328.70px;width:51.200000000000045px;height:11.399999999999977px;border:1px solid #7b7b7b;border-radius:2px;box-sizing:border-box;background:linear-gradient(#f4f4f4 0%,#ececec 45%,#dedede 52%,#d2d2d2 100%);"></div><div class="t" style="left:470.80px;top:330.07px;font-size:7.0px;color:#000;transform:scaleX(0.890);-webkit-text-stroke:0.22px currentColor;">Close Plot</div><div style="left:518.60px;top:328.70px;width:51.39999999999998px;height:11.399999999999977px;border:1px solid #7b7b7b;border-radius:2px;box-sizing:border-box;background:linear-gradient(#f4f4f4 0%,#ececec 45%,#dedede 52%,#d2d2d2 100%);"></div><div class="t" style="left:531.10px;top:330.07px;font-size:7.0px;color:#000;transform:scaleX(0.881);-webkit-text-stroke:0.22px currentColor;">Add Func</div><div style="left:459.40px;top:343.80px;width:51.200000000000045px;height:11.399999999999977px;border:1px solid #7b7b7b;border-radius:2px;box-sizing:border-box;background:linear-gradient(#f4f4f4 0%,#ececec 45%,#dedede 52%,#d2d2d2 100%);"></div><div class="t" style="left:465.70px;top:345.17px;font-size:7.0px;color:#000;transform:scaleX(0.863);-webkit-text-stroke:0.22px currentColor;">Close All Plots</div><div style="left:518.60px;top:343.80px;width:51.39999999999998px;height:11.399999999999977px;border:1px solid #b4b8bc;border-radius:2px;box-sizing:border-box;background:linear-gradient(#f4f4f4 0%,#ececec 45%,#dedede 52%,#d2d2d2 100%);background:#f4f4f4;"></div><div class="t" style="left:532.10px;top:345.17px;font-size:7.0px;color:#838383;transform:scaleX(0.871);-webkit-text-stroke:0.22px currentColor;">Del Func</div><div style="left:459.40px;top:358.90px;width:51.200000000000045px;height:11.399999999999977px;border:1px solid #7b7b7b;border-radius:2px;box-sizing:border-box;background:linear-gradient(#f4f4f4 0%,#ececec 45%,#dedede 52%,#d2d2d2 100%);"></div><div class="t" style="left:466.80px;top:360.27px;font-size:7.0px;color:#000;transform:scaleX(0.926);-webkit-text-stroke:0.22px currentColor;">Update Data</div><div style="left:518.60px;top:358.90px;width:51.39999999999998px;height:11.399999999999977px;border:1px solid #7b7b7b;border-radius:2px;box-sizing:border-box;background:linear-gradient(#f4f4f4 0%,#ececec 45%,#dedede 52%,#d2d2d2 100%);"></div><div class="t" style="left:529.10px;top:360.27px;font-size:7.0px;color:#000;transform:scaleX(0.849);-webkit-text-stroke:0.22px currentColor;">Clone Func</div></div></body></html>
